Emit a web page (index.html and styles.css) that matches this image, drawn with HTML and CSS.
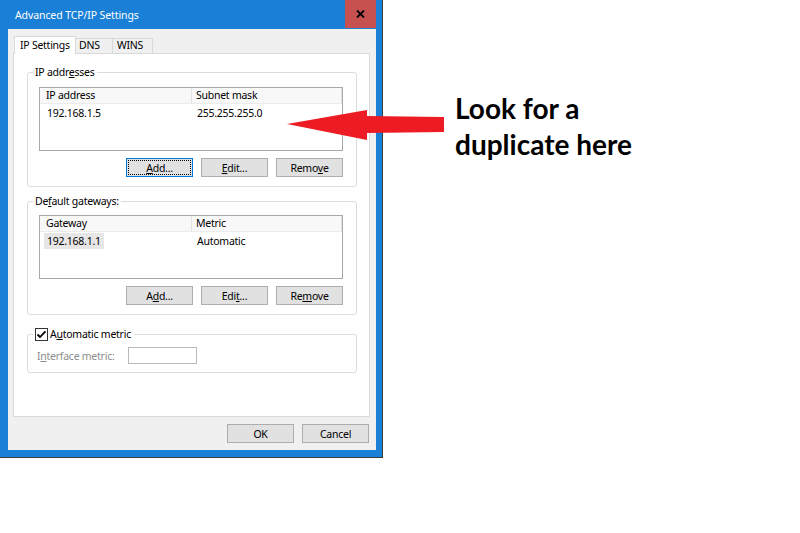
FILE: index.html
```html
<!DOCTYPE html>
<html>
<head>
<meta charset="utf-8">
<title>Advanced TCP/IP Settings</title>
<link rel="stylesheet" href="styles.css">
</head>
<body>
<div class="stage">
  <div class="window">
    <div class="titlebar">
      <span class="title">Advanced TCP/IP Settings</span>
      <span class="close">
        <svg width="9" height="8" viewBox="0 0 9 8"><path d="M1 0.5 L8 7.5 M8 0.5 L1 7.5" stroke="#000" stroke-width="1.8" fill="none"/></svg>
      </span>
    </div>
    <div class="client">
      <div class="tabs">
        <div class="tab tab-ip active">IP Settings</div>
        <div class="tab tab-dns">DNS</div>
        <div class="tab tab-wins">WINS</div>
      </div>
      <div class="panel">
        <fieldset class="group">
          <legend class="glabel">IP addr<u>e</u>sses</legend>
          <div class="gbody">
            <div class="list">
              <div class="lhead"><span class="c1">IP address</span><span class="c2">Subnet mask</span></div>
              <div class="lrow"><span class="c1 cell">192.168.1.5</span><span class="c2 cell">255.255.255.0</span></div>
            </div>
            <div class="btnrow">
              <button class="btn focus"><u>A</u>dd...</button>
              <button class="btn"><u>E</u>dit...</button>
              <button class="btn">Remo<u>v</u>e</button>
            </div>
          </div>
        </fieldset>
        <fieldset class="group group-gw">
          <legend class="glabel">De<u>f</u>ault gateways:</legend>
          <div class="gbody">
            <div class="list">
              <div class="lhead"><span class="c1">Gateway</span><span class="c2">Metric</span></div>
              <div class="lrow"><span class="c1"><span class="cell sel">192.168.1.1</span></span><span class="c2 cell">Automatic</span></div>
            </div>
            <div class="btnrow">
              <button class="btn">A<u>d</u>d...</button>
              <button class="btn">Edi<u>t</u>...</button>
              <button class="btn">Re<u>m</u>ove</button>
            </div>
          </div>
        </fieldset>
        <fieldset class="group group-metric">
          <legend class="glabel chklabel">
            <svg class="chk" width="13" height="13" viewBox="0 0 13 13"><rect x="0.5" y="0.5" width="12" height="12" fill="#fff" stroke="#333"/><path d="M2.5 6.5 L5 9 L10.5 3.3" stroke="#000" stroke-width="1.8" fill="none"/></svg>
            <span>A<u>u</u>tomatic metric</span>
          </legend>
          <div class="metricrow">
            <span class="dis">I<u>n</u>terface metric:</span>
            <span class="input"></span>
          </div>
        </fieldset>
      </div>
      <div class="footer">
        <button class="btn">OK</button>
        <button class="btn">Cancel</button>
      </div>
    </div>
  </div>
  <svg class="arrow" width="170" height="40" viewBox="280 105 170 40">
    <polygon points="287,124 367,110 367,116 444,117 444,132 367,133 367,140" fill="#ed1c24"/>
  </svg>
  <div class="note">Look for a<br>duplicate here</div>
</div>
</body>
</html>
```

FILE: styles.css
```css
* { box-sizing: border-box; }
html, body { margin: 0; padding: 0; background: #fff; }
body {
  font-family: "Noto Sans", "DejaVu Sans", sans-serif;
  font-size: 10.5px;
  letter-spacing: -0.25px;
  color: #000;
}
.stage {
  position: relative;
  display: flex;
  align-items: flex-start;
  width: 800px;
  height: 533px;
}
.window {
  width: 383px;
  height: 458px;
  flex: none;
  background: #1a7fd6;
  border-right: 1px solid #3c3c3c;
  border-bottom: 1px solid #3c3c3c;
  padding: 0 6px 7px 8px;
  display: flex;
  flex-direction: column;
}
.titlebar {
  height: 29px;
  display: flex;
  align-items: center;
  color: #fff;
  font-size: 10.5px;
  letter-spacing: -0.1px;
}
.title { padding-left: 7px; }
.close {
  margin-left: auto;
  align-self: flex-start;
  width: 31px;
  height: 28px;
  background: #c75050;
  display: flex;
  align-items: center;
  justify-content: center;
}
.client {
  flex: 1;
  background: #f0f0f0;
  padding: 7px 6px 0 5px;
  display: flex;
  flex-direction: column;
}
.tabs {
  height: 17px;
  display: flex;
  align-items: flex-end;
  padding-left: 1px;
  position: relative;
  z-index: 1;
}
.tab {
  height: 15px;
  border: 1px solid #d9d9d9;
  border-bottom: none;
  background: #f0f0f0;
  line-height: 13px;
  padding-left: 3px;
}
.tab.active {
  height: 18px;
  margin-bottom: -1px;
  background: #fff;
  padding-left: 5px;
  line-height: 16px;
}
.tab-ip { width: 62px; }
.tab-dns { width: 38px; margin-left: -1px; }
.tab-wins { width: 41px; margin-left: -1px; padding-left: 4px; }
.panel {
  flex: 1;
  background: #fff;
  border: 1px solid #d9d9d9;
  padding: 11px 12px 0 13px;
  display: flex;
  flex-direction: column;
}
.group {
  margin: 0;
  padding: 0;
  border: 1px solid #dcdcdc;
  border-radius: 3px;
  min-width: 0;
}
.group-gw { margin-top: 7px; }
.group-metric { margin-top: 12px; }
.glabel {
  margin-left: 5px;
  padding: 0 2px;
  line-height: 14px;
  height: 14px;
}
.chklabel {
  display: flex;
  align-items: center;
  gap: 2px;
  padding: 0 3px 0 2px;
}
.chk { display: block; flex: none; }
.gbody { padding: 8px 13px 9px 11px; }
.group-gw .gbody { padding-top: 7px; }
.list {
  height: 64px;
  border: 1px solid #a8a8a8;
  background: #fff;
}
.lhead {
  height: 16px;
  display: flex;
  background: #f8f8f8;
  border-bottom: 1px solid #ececec;
  line-height: 15px;
}
.lhead .c1 {
  width: 152px;
  padding-left: 6px;
  border-right: 1px solid #e2e2e2;
}
.lhead .c2 {
  width: 150px;
  padding-left: 4px;
  border-right: 1px solid #e2e2e2;
}
.lrow {
  display: flex;
  height: 16px;
  line-height: 16px;
  margin-top: 1px;
}
.lrow .c1 { width: 152px; padding-left: 4px; }
.lrow .c2 { width: 150px; padding-left: 5px; }
.cell { display: inline-block; }
.lrow .c1.cell { padding-left: 7px; }
.sel {
  background: #e6e6e6;
  padding: 0 3px;
}
.btnrow {
  display: flex;
  justify-content: flex-end;
  gap: 8px;
  margin-top: 7px;
}
.btn {
  width: 67px;
  height: 19px;
  padding: 0;
  margin: 0;
  font-family: inherit;
  font-size: inherit;
  letter-spacing: inherit;
  color: #000;
  background: #e1e1e1;
  border: 1px solid #adadad;
  border-radius: 0;
  line-height: 16px;
  text-align: center;
}
.btn.focus {
  border-color: #0078d7;
  outline: 1px dotted #000;
  outline-offset: -3px;
}
.metricrow {
  display: flex;
  align-items: center;
  padding: 6px 9px 8px 9px;
}
.dis { color: #8d8d8d; width: 91px; flex: none; }
.input {
  width: 69px;
  height: 17px;
  border: 1px solid #b9b9b9;
  background: #fff;
}
.footer {
  display: flex;
  justify-content: flex-end;
  gap: 8px;
  margin-top: 7px;
  margin-bottom: 7px;
  padding-right: 1px;
}
.arrow {
  position: absolute;
  left: 280px;
  top: 105px;
}
.note {
  margin-left: 72px;
  margin-top: 90px;
  font-family: Lato, "Open Sans", sans-serif;
  font-weight: 700;
  font-size: 28px;
  line-height: 36px;
  letter-spacing: 0;
  color: #000;
}
```
